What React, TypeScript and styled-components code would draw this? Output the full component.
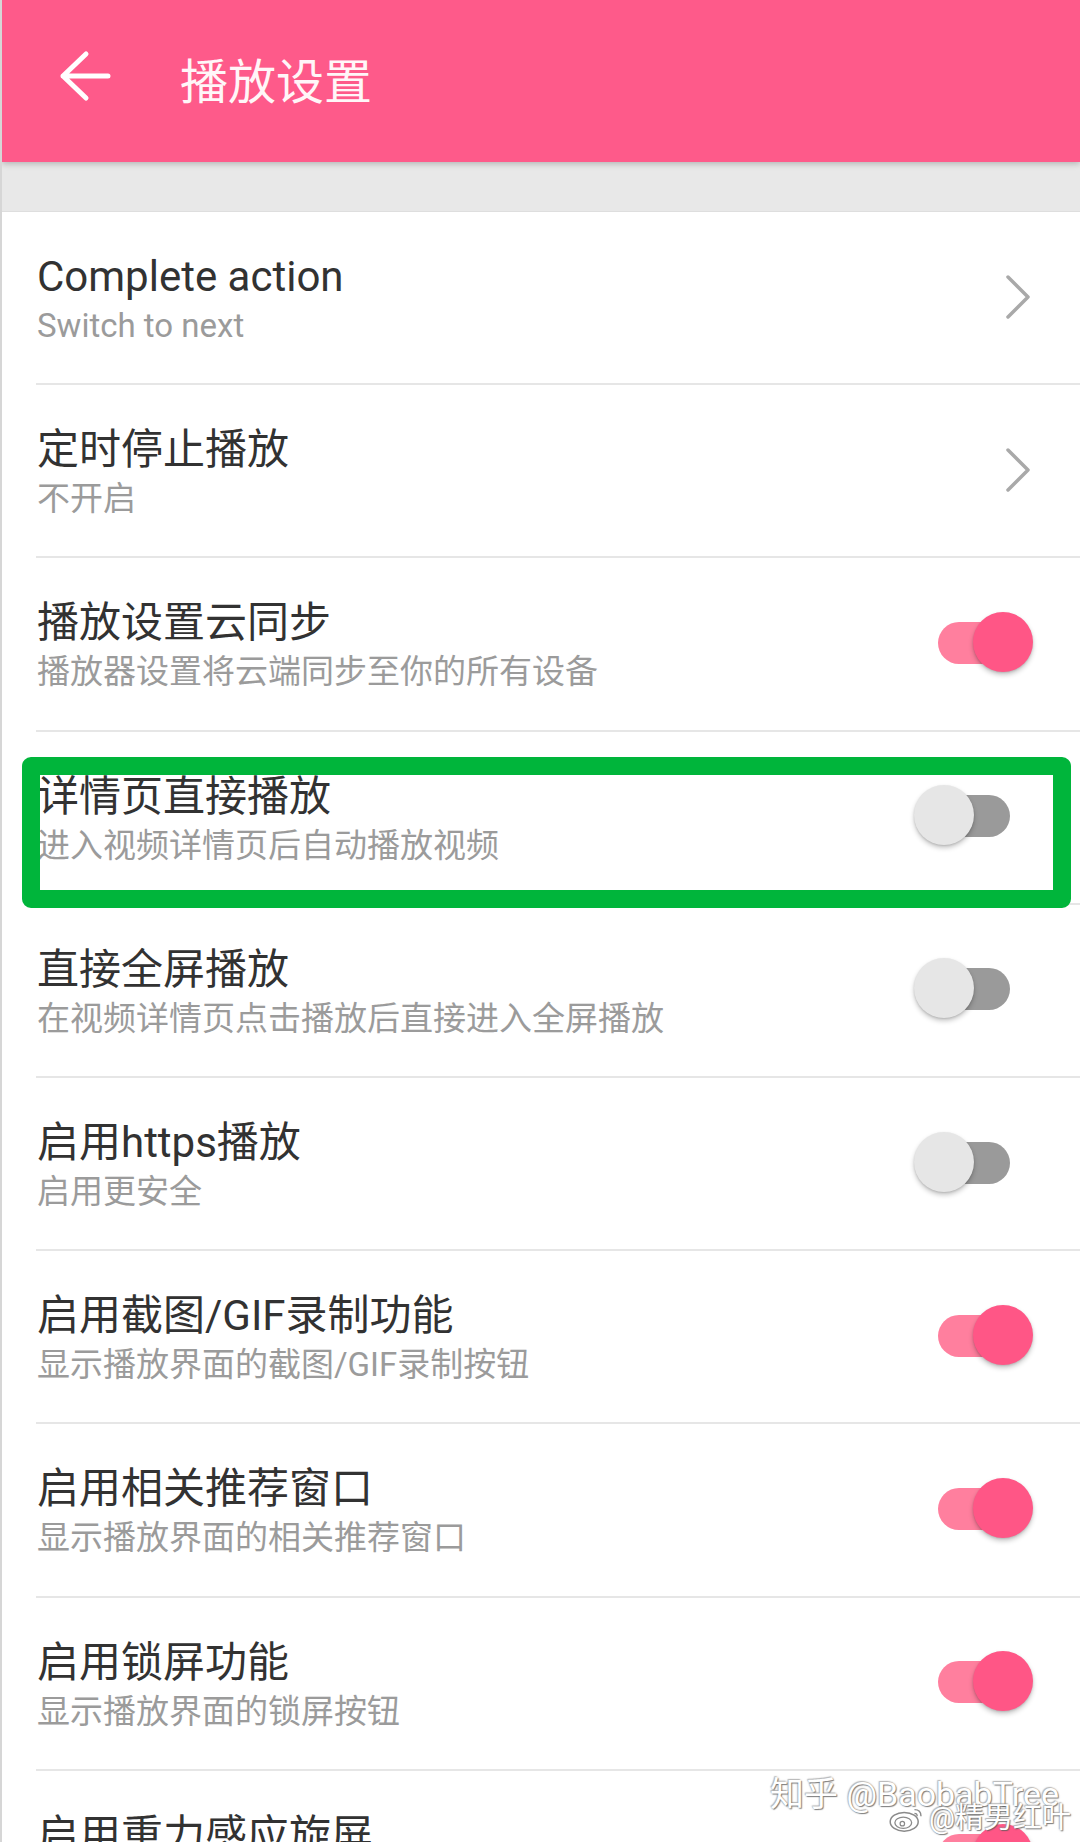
import React from "react";
import styled, { createGlobalStyle } from "styled-components";

const GlobalStyle = createGlobalStyle`
  html, body {
    margin: 0;
    padding: 0;
    background: #ffffff;
  }
  body {
    font-family: Roboto, "Noto Sans CJK SC", "Noto Sans", sans-serif;
    -webkit-font-smoothing: antialiased;
  }
  * { box-sizing: border-box; }
`;

const ROW_H = 173.2;

const Page = styled.div`
  position: relative;
  width: 1080px;
  height: 1842px;
  overflow: hidden;
  background: #ffffff;
  border-left: 2px solid rgba(0, 0, 0, 0.16);
`;

const Header = styled.header`
  position: relative;
  z-index: 2;
  height: 162px;
  padding-bottom: 6px;
  background: #fe5a8a;
  display: flex;
  align-items: center;
  box-shadow: 0 2px 6px rgba(0, 0, 0, 0.22);
`;

const BackButton = styled.div`
  width: 178px;
  display: flex;
  align-items: center;
  padding-left: 57px;
`;

const HeaderTitle = styled.h1`
  margin: 0;
  font-family: "Noto Sans CJK SC", Roboto, sans-serif;
  font-weight: 400;
  font-size: 48px;
  line-height: 48px;
  color: #fff6f8;
  letter-spacing: 0;
`;

const Strip = styled.div`
  height: 50px;
  background: #e8e8e8;
  border-bottom: 1px solid #dedede;
`;

const List = styled.ul`
  list-style: none;
  margin: 0;
  padding: 0;
`;

const Row = styled.li`
  position: relative;
  height: ${ROW_H}px;
  padding-left: 34px;
  display: flex;
`;

const RowInner = styled.div`
  flex: 1;
  display: flex;
  align-items: stretch;
  border-bottom: 2px solid #e6e6e6;
  padding-right: 47px;
`;

const TextCol = styled.div`
  flex: 1;
  padding-left: 1px;
  padding-top: 44px;
  min-width: 0;
`;

const Title = styled.div`
  font-size: 42px;
  line-height: 42px;
  color: #323232;
  font-weight: 400;
  white-space: nowrap;
`;

const Sub = styled.div`
  margin-top: 11px;
  font-size: 33px;
  line-height: 34px;
  color: #9b9b9b;
  font-weight: 400;
  white-space: nowrap;
`;

const Control = styled.div`
  align-self: center;
  display: flex;
  align-items: center;
  justify-content: flex-end;
  margin-top: -2px;
`;

const ChevronBox = styled.div`
  width: 28px;
  height: 44px;
  display: flex;
  align-items: center;
  justify-content: flex-start;
`;

const ToggleBox = styled.div`
  position: relative;
  width: 120px;
  height: 62px;
`;

const Track = styled.div<{ $on: boolean }>`
  position: absolute;
  left: 25px;
  top: 10px;
  width: 72px;
  height: 42px;
  border-radius: 21px;
  background: ${(p) => (p.$on ? "#ff7f9e" : "#9a9a9a")};
`;

const Knob = styled.div<{ $on: boolean }>`
  position: absolute;
  top: 0;
  left: ${(p) => (p.$on ? "60px" : "1px")};
  width: 60px;
  height: 60px;
  border-radius: 50%;
  background: ${(p) => (p.$on ? "#ff5686" : "#e6e6e6")};
  box-shadow: 0 3px 5px rgba(0, 0, 0, 0.22), 0 1px 2px rgba(0, 0, 0, 0.12);
`;

const Highlight = styled.div`
  position: absolute;
  left: 20px;
  top: 25px;
  width: 1049px;
  height: 151px;
  border: 18px solid #00b53b;
  border-radius: 9px;
  pointer-events: none;
  z-index: 1;
`;

const Watermark = styled.div`
  position: absolute;
  left: 768px;
  top: 1777px;
  z-index: 3;
  display: flex;
  flex-direction: column;
  pointer-events: none;
`;

const WmLine = styled.div<{ $indent: number; $size: number }>`
  display: flex;
  align-items: center;
  gap: 3px;
  margin-left: ${(p) => p.$indent}px;
  font-family: Roboto, "Noto Sans CJK SC", sans-serif;
  font-size: ${(p) => p.$size}px;
  line-height: ${(p) => p.$size}px;
  color: #ffffff;
  white-space: nowrap;
  text-shadow: 1px 1px 1px rgba(90, 90, 90, 0.75), -1px -1px 1px rgba(150, 150, 150, 0.6),
    0 0 2px rgba(120, 120, 120, 0.6);
  & + & {
    margin-top: -7px;
  }
`;

const BackArrow = () => (
  <svg width="56" height="56" viewBox="0 0 56 56" fill="none">
    <path
      d="M4 26 L49 26 M27 4 L4 26 L27 48"
      stroke="#ffffff"
      strokeWidth="5"
      strokeLinecap="round"
      strokeLinejoin="round"
    />
  </svg>
);

const Chevron = () => (
  <svg width="26" height="44" viewBox="0 0 26 44" fill="none">
    <path d="M3 2 L23 22 L3 42" stroke="#a9a9a9" strokeWidth="3.5" strokeLinecap="round" strokeLinejoin="round" />
  </svg>
);

const WeiboLogo = () => (
  <svg width="38" height="28" viewBox="0 0 40 30" fill="none">
    <ellipse cx="17" cy="18" rx="15" ry="10" fill="#ffffff" stroke="#8a8a8a" strokeWidth="1.6" />
    <ellipse cx="16" cy="19" rx="9" ry="6" fill="#ffffff" stroke="#8a8a8a" strokeWidth="1.4" />
    <circle cx="15" cy="20" r="2.4" fill="none" stroke="#8a8a8a" strokeWidth="1.3" />
    <path d="M28 5 Q35 5 35 12" stroke="#8a8a8a" strokeWidth="1.5" fill="none" />
    <path d="M28 9 Q31 9 31 12" stroke="#8a8a8a" strokeWidth="1.3" fill="none" />
  </svg>
);

const Toggle = ({ on }: { on: boolean }) => (
  <ToggleBox>
    <Track $on={on} />
    <Knob $on={on} />
  </ToggleBox>
);

type Item = {
  title: string;
  sub?: string;
  kind: "chevron" | "toggle";
  on?: boolean;
  highlight?: boolean;
};

const items: Item[] = [
  { title: "Complete action", sub: "Switch to next", kind: "chevron" },
  { title: "定时停止播放", sub: "不开启", kind: "chevron" },
  { title: "播放设置云同步", sub: "播放器设置将云端同步至你的所有设备", kind: "toggle", on: true },
  { title: "详情页直接播放", sub: "进入视频详情页后自动播放视频", kind: "toggle", on: false, highlight: true },
  { title: "直接全屏播放", sub: "在视频详情页点击播放后直接进入全屏播放", kind: "toggle", on: false },
  { title: "启用https播放", sub: "启用更安全", kind: "toggle", on: false },
  { title: "启用截图/GIF录制功能", sub: "显示播放界面的截图/GIF录制按钮", kind: "toggle", on: true },
  { title: "启用相关推荐窗口", sub: "显示播放界面的相关推荐窗口", kind: "toggle", on: true },
  { title: "启用锁屏功能", sub: "显示播放界面的锁屏按钮", kind: "toggle", on: true },
  { title: "启用重力感应旋屏", kind: "toggle", on: true },
];

export default function App() {
  return (
    <>
      <GlobalStyle />
      <Page>
        <Header>
          <BackButton>
            <BackArrow />
          </BackButton>
          <HeaderTitle>播放设置</HeaderTitle>
        </Header>
        <Strip />
        <List>
          {items.map((it) => (
            <Row key={it.title}>
              <RowInner>
                <TextCol>
                  <Title>{it.title}</Title>
                  {it.sub && <Sub>{it.sub}</Sub>}
                </TextCol>
                <Control>
                  {it.kind === "chevron" ? (
                    <ChevronBox>
                      <Chevron />
                    </ChevronBox>
                  ) : (
                    <Toggle on={!!it.on} />
                  )}
                </Control>
              </RowInner>
              {it.highlight && <Highlight />}
            </Row>
          ))}
        </List>
        <Watermark>
          <WmLine $indent={0} $size={34}>知乎 @BaobabTree</WmLine>
          <WmLine $indent={118} $size={29}>
            <WeiboLogo />
            @精男红叶
          </WmLine>
        </Watermark>
      </Page>
    </>
  );
}
